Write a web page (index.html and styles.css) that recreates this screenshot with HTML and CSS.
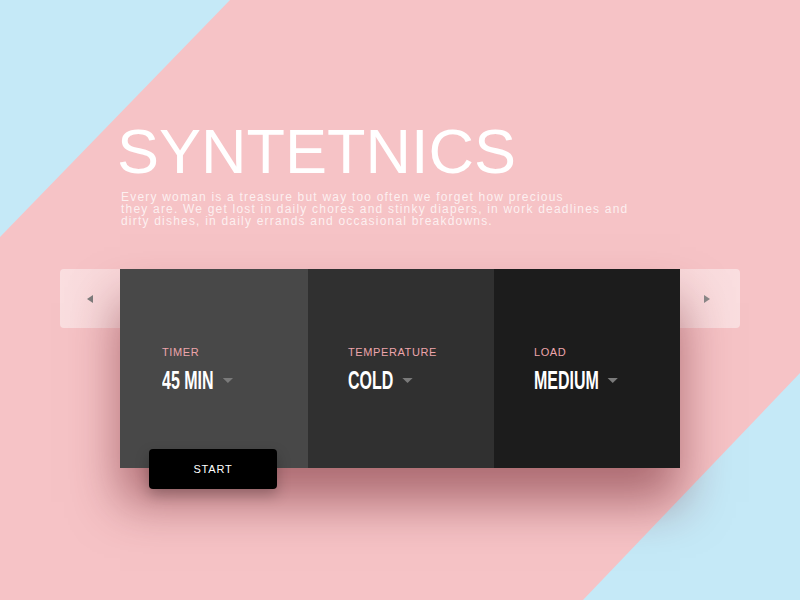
FILE: index.html
```html
<!DOCTYPE html>
<html lang="en">
<head>
  <meta charset="UTF-8" />
  <meta name="viewport" content="width=device-width, initial-scale=1.0" />
  <title>Syntetnics</title>
  <link rel="stylesheet" href="styles.css">
</head>
<body>
  <div class="page">
    <header class="intro">
      <h1>SYNTETNICS</h1>
      <p>Every woman is a treasure but way too often we forget how precious<br>
        they are. We get lost in daily chores and stinky diapers, in work deadlines and
        dirty dishes, in daily errands and occasional breakdowns.</p>
    </header>

    <div class="slider">
      <div class="strip">
        <span class="arrow arrow-left"></span>
        <span class="arrow arrow-right"></span>
      </div>

      <div class="panel">
        <div class="option timer">
          <span class="label">TIMER</span>
          <span class="value">45 MIN <i class="caret"></i></span>
        </div>
        <div class="option temp">
          <span class="label">TEMPERATURE</span>
          <span class="value">COLD <i class="caret"></i></span>
        </div>
        <div class="option load">
          <span class="label">LOAD</span>
          <span class="value">MEDIUM <i class="caret"></i></span>
        </div>
        <button class="start">START</button>
      </div>
    </div>
  </div>
</body>
</html>
```

FILE: styles.css
```css
html, body {
  margin: 0;
  height: 100%;
}

body {
  font-family: "Liberation Sans", Arial, sans-serif;
  background: #f6c3c6;
  overflow: hidden;
  position: relative;
}

/* blue corners of the backdrop */
body::before,
body::after {
  content: "";
  position: absolute;
  inset: 0;
  background: #c5e9f7;
}

body::before {
  clip-path: polygon(0 0, 230px 0, 0 237px);
}

body::after {
  clip-path: polygon(800px 373px, 800px 600px, 583px 600px);
}

.page {
  position: relative;
  z-index: 1;
  padding-top: 116px;
}

.intro {
  padding-left: 117px;
}

.intro h1 {
  margin: 0;
  font-size: 63px;
  font-weight: normal;
  line-height: 70px;
  color: #fff;
}

.intro p {
  width: 530px;
  margin: 5px 0 0 4px;
  font-size: 12px;
  line-height: 12px;
  letter-spacing: 1.2px;
  color: rgba(255, 255, 255, 0.75);
}

.slider {
  display: grid;
  width: 680px;
  margin: 42px 0 0 60px;
}

.strip,
.panel {
  grid-area: 1 / 1;
}

.strip {
  height: 59px;
  align-self: start;
  display: flex;
  justify-content: space-between;
  align-items: center;
  padding: 0 30px 0 27px;
  border-radius: 4px;
  background: linear-gradient(90deg, rgba(255, 255, 255, 0.45), rgba(255, 255, 255, 0.3) 12%, rgba(255, 255, 255, 0.35) 88%, rgba(255, 255, 255, 0.45));
}

.arrow {
  width: 0;
  height: 0;
  border-top: 4px solid transparent;
  border-bottom: 4px solid transparent;
}

.arrow-left {
  border-right: 6px solid #7d7d7d;
}

.arrow-right {
  border-left: 6px solid #8a8a8a;
}

.panel {
  position: relative;
  justify-self: center;
  width: 560px;
  height: 199px;
  display: flex;
  box-shadow: 0 34px 46px rgba(100, 20, 30, 0.5);
}

.option {
  flex: 1;
  display: flex;
  flex-direction: column;
  align-items: flex-start;
  padding-top: 77px;
}

.timer { background: #484848; padding-left: 42px; }
.temp { background: #303030; padding-left: 40px; }
.load { background: #1c1c1c; padding-left: 40px; }

.label {
  font-size: 11px;
  letter-spacing: 0.6px;
  color: #eda5ab;
}

/* condensed look: the whole row is squeezed, caret sized to compensate */
.value {
  margin-top: 8px;
  font-weight: bold;
  font-size: 25px;
  color: #fff;
  display: flex;
  align-items: center;
  gap: 14px;
  transform: scaleX(0.64);
  transform-origin: left center;
}

.caret {
  width: 0;
  height: 0;
  border-left: 8px solid transparent;
  border-right: 8px solid transparent;
  border-top: 5px solid #7a7a7a;
}

.start {
  position: absolute;
  left: 29px;
  bottom: -21px;
  width: 128px;
  height: 40px;
  border: none;
  border-radius: 4px;
  background: #000;
  color: #fff;
  font-family: "Liberation Sans", Arial, sans-serif;
  font-size: 11px;
  letter-spacing: 0.8px;
  box-shadow: 0 6px 14px rgba(0, 0, 0, 0.25);
}
```
